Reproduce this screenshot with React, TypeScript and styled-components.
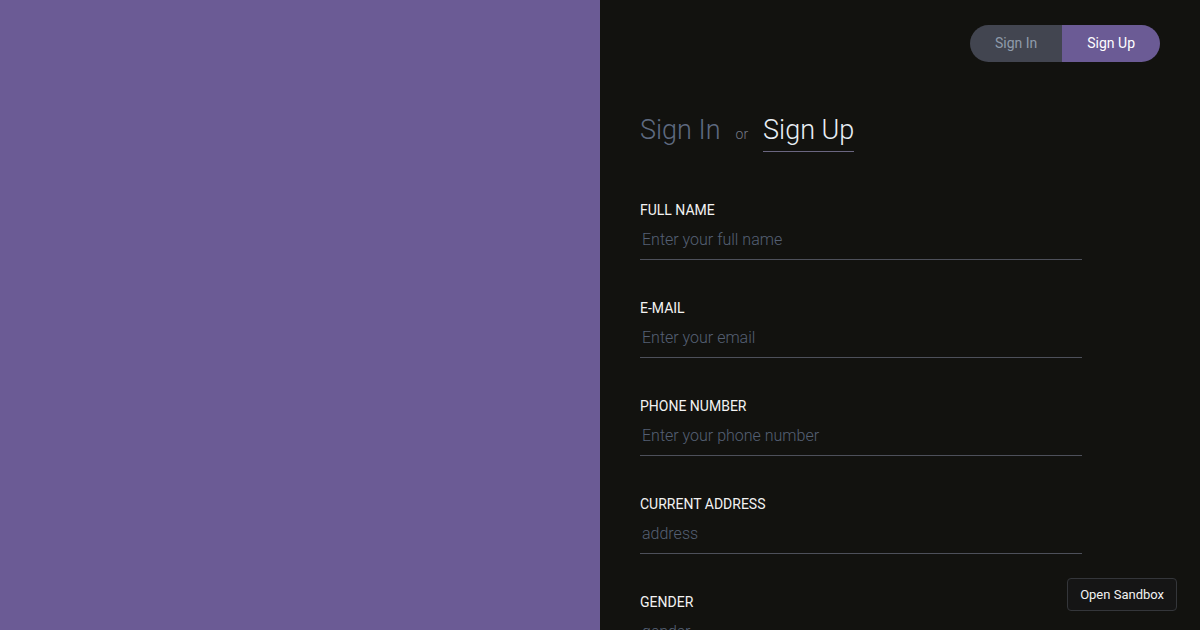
import React, { FC } from 'react';
import styled, { createGlobalStyle } from "styled-components";

const GlobalStyle = createGlobalStyle`
  html, body {
    margin: 0;
    padding: 0;
    background: #12120f;
    font-family: Roboto, "Noto Sans", sans-serif;
  }
  * {
    box-sizing: border-box;
  }
`

const Page = styled.div`
  display: grid;
  grid-template-columns: 1fr 1fr;
  min-height: 100vh;
`

const SidePanel = styled.div`
  background: #6b5b95;
`

const FormPanel = styled.div`
  background: #12120f;
  padding: 25px 40px 40px;
  display: flex;
  flex-direction: column;
`

const ToggleRow = styled.div`
  display: flex;
  justify-content: flex-end;
`

const Toggle = styled.div`
  display: flex;
  border-radius: 25px;
  overflow: hidden;
`

const ToggleButton = styled.button<{ $active?: boolean }>`
  border: none;
  font: inherit;
  font-size: 14px;
  height: 37px;
  padding: 0 25px 1px;
  cursor: pointer;
  background: ${p => p.$active ? "#6b5b95" : "#424550"};
  color: ${p => p.$active ? "#ffffff" : "#8f9bab"};
`

const TitleRow = styled.div`
  display: flex;
  align-items: baseline;
  margin-top: 52px;
  margin-bottom: 50px;
`

const TitleLink = styled.a<{ $active?: boolean }>`
  font-size: 27px;
  font-weight: 300;
  line-height: 33px;
  text-decoration: none;
  cursor: pointer;
  color: ${p => p.$active ? "#e8eef5" : "#5e6a80"};
  padding-bottom: 4px;
  border-bottom: 1px solid ${p => p.$active ? "#6a6680" : "transparent"};
`

const Or = styled.span`
  font-size: 14px;
  font-weight: 300;
  color: #737885;
  margin: 0 15px;
`

const Form = styled.form`
  width: 85%;
`

const Field = styled.div`
  margin-bottom: 40px;
`

const Label = styled.label`
  display: block;
  font-size: 14px;
  line-height: 16px;
  color: #f2f2f2;
  text-transform: uppercase;
`

const Input = styled.input`
  display: block;
  width: 100%;
  background: transparent;
  border: none;
  border-bottom: 1px solid #4d505a;
  outline: none;
  font-family: inherit;
  font-size: 16px;
  font-weight: 300;
  line-height: 20px;
  height: 42px;
  padding: 11px 2px 10px;
  color: #e8eef5;

  &::placeholder {
    color: #556074;
  }
`

const SandboxButton = styled.button`
  position: fixed;
  right: 23px;
  bottom: 19px;
  height: 33px;
  padding: 0 12px;
  background: #151515;
  color: #f2f2f2;
  border: 1px solid #34363a;
  border-radius: 4px;
  font-family: Roboto, "Noto Sans", sans-serif;
  font-size: 13px;
  cursor: pointer;
`

const fields = [
    { label: "Full Name", placeholder: "Enter your full name" },
    { label: "E-mail", placeholder: "Enter your email" },
    { label: "Phone Number", placeholder: "Enter your phone number" },
    { label: "Current Address", placeholder: "address" },
    { label: "Gender", placeholder: "gender" },
]

const App: FC = () => {
    return (
        <>
            <GlobalStyle/>
            <Page>
                <SidePanel/>
                <FormPanel>
                    <ToggleRow>
                        <Toggle>
                            <ToggleButton>Sign In</ToggleButton>
                            <ToggleButton $active>Sign Up</ToggleButton>
                        </Toggle>
                    </ToggleRow>
                    <TitleRow>
                        <TitleLink>Sign In</TitleLink>
                        <Or>or</Or>
                        <TitleLink $active>Sign Up</TitleLink>
                    </TitleRow>
                    <Form>
                        {fields.map(f => (
                            <Field key={f.label}>
                                <Label>{f.label}</Label>
                                <Input placeholder={f.placeholder}/>
                            </Field>
                        ))}
                    </Form>
                </FormPanel>
            </Page>
            <SandboxButton>Open Sandbox</SandboxButton>
        </>
    );
};

export default App;
